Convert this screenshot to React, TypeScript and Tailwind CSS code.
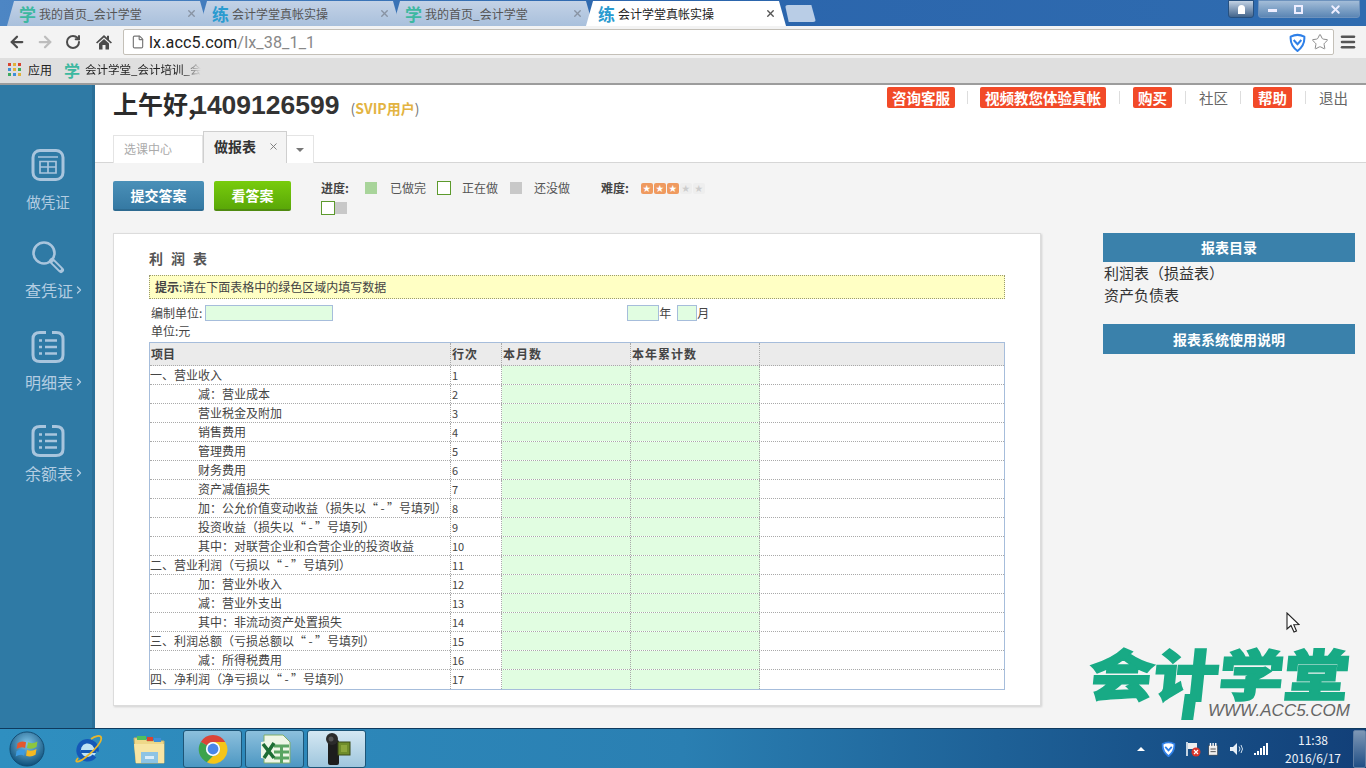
import { ArrowLeft, ArrowRight, ChevronRight, File, Menu, RotateCw, Star, X } from "lucide-react"

const FONT = "[font-family:'Noto_Sans_CJK_SC','Liberation_Sans',sans-serif]"

const DASH = "\u201C\u2009-\u2009\u201D"

const rows = [
  { name: "一、营业收入", top: true },
  { name: "减\uFF1A营业成本" },
  { name: "营业税金及附加" },
  { name: "销售费用" },
  { name: "管理费用" },
  { name: "财务费用" },
  { name: "资产减值损失" },
  { name: `加\uFF1A公允价值变动收益\uFF08损失以${DASH}号填列\uFF09` },
  { name: `投资收益\uFF08损失以${DASH}号填列\uFF09` },
  { name: "其中\uFF1A对联营企业和合营企业的投资收益" },
  { name: `二、营业利润\uFF08亏损以${DASH}号填列\uFF09`, top: true },
  { name: "加\uFF1A营业外收入" },
  { name: "减\uFF1A营业外支出" },
  { name: "其中\uFF1A非流动资产处置损失" },
  { name: `三、利润总额\uFF08亏损总额以${DASH}号填列\uFF09`, top: true },
  { name: "减\uFF1A所得税费用" },
  { name: `四、净利润\uFF08净亏损以${DASH}号填列\uFF09`, top: true },
]

function Shield({ className }: { className?: string }) {
  return (
    <svg viewBox="0 0 20 22" className={className} fill="none">
      <path d="M2 4 Q10 0 18 4 Q19 14 10 21 Q1 14 2 4Z" stroke="#2f80e8" strokeWidth="2.4" fill="#fff" />
      <path d="M5.5 8 L10 13 L14.5 8" stroke="#2f80e8" strokeWidth="2.4" />
    </svg>
  )
}

function BrowserTab({ glyph, title, active }: { glyph: string; title: string; active?: boolean }) {
  const isXue = glyph === "学"
  return (
    <div
      className={`flex h-[25px] w-[200px] -mr-[7px] items-center pl-[12px] pr-[10px] [clip-path:polygon(0_100%,7px_0,calc(100%-7px)_0,100%_100%)] ${
        active ? "z-10 bg-white" : "bg-gradient-to-b from-[#c3d2e6] to-[#a9c0dc]"
      }`}
    >
      <span className={`text-[17px] font-bold leading-none ${isXue ? "text-[#3db8a0]" : "text-[#2a9bd0]"}`}>{glyph}</span>
      <span className={`ml-[3px] flex-1 truncate text-[12px] ${active ? "text-[#222]" : "text-[#555]"}`}>{title}</span>
      <X size={11} strokeWidth={3} className={active ? "text-[#555]" : "text-[#8893a3]"} />
    </div>
  )
}

function TopBar() {
  return (
    <div className="flex h-[26px] items-end bg-gradient-to-r from-[#4d86c4] via-[#2b65ac] to-[#2f6cb0] pl-[7px]">
      <BrowserTab glyph="学" title="我的首页_会计学堂" />
      <BrowserTab glyph="练" title="会计学堂真帐实操" />
      <BrowserTab glyph="学" title="我的首页_会计学堂" />
      <BrowserTab glyph="练" title="会计学堂真帐实操" active />
      <div className="mb-[4px] ml-[6px] h-[17px] w-[31px] self-end rounded-[3px] bg-[#b9cde6] [clip-path:polygon(0_0,85%_0,100%_100%,12%_100%)]" />
      <div className="ml-auto mb-[8px] flex h-[18px] items-stretch self-start">
        <div className="flex w-[26px] items-center justify-center rounded-b-[3px] border border-[#26507f] bg-gradient-to-b from-[#c2d2e4] to-[#43658c]">
          <div className="h-[9px] w-[7px] rounded-t-full bg-white" />
        </div>
        <div className="ml-[4px] flex w-[102px] rounded-b-[3px] border border-[#6d92bd] bg-gradient-to-b from-[#a3bdd8] to-[#5b86b4] text-[#eef]">
          <div className="flex w-[27px] items-center justify-center">
            <div className="mt-[3px] h-[3px] w-[9px] bg-[#eef]" />
          </div>
          <div className="flex w-[25px] items-center justify-center">
            <div className="h-[9px] w-[9px] border-2 border-[#eef]" />
          </div>
          <div className="flex flex-1 items-center justify-center">
            <X size={13} strokeWidth={3.5} />
          </div>
        </div>
        <div className="w-[6px]" />
      </div>
    </div>
  )
}

function HomeIcon() {
  return (
    <svg viewBox="0 0 16 16" className="ml-[15px] h-[16px] w-[16px]">
      <path d="M8 1 L11 3.8 V1.8 H13 V5.7 L16 8.5 L14.8 9.6 L8 3.6 L1.2 9.6 L0 8.5Z" fill="#4c4c4c" />
      <path d="M3 9.5 L8 5 L13 9.5 V15.5 H9.5 V11 H6.5 V15.5 H3Z" fill="#4c4c4c" />
    </svg>
  )
}

function Toolbar() {
  return (
    <div className="flex h-[32px] items-center bg-[#f3f3f3] pl-[8px]">
      <ArrowLeft size={18} strokeWidth={3} className="text-[#4c4c4c]" />
      <ArrowRight size={18} strokeWidth={3} className="ml-[10px] text-[#bdbdbd]" />
      <RotateCw size={16} strokeWidth={3} className="ml-[11px] text-[#4c4c4c]" />
      <HomeIcon />
      <div className="ml-[11px] flex h-[26px] w-[1211px] items-center rounded-[2px] border border-[#c4c0b8] bg-white pl-[7px] pr-[4px]">
        <File size={14} className="text-[#777]" />
        <span className="ml-[4px] mt-[3px] [font-family:'Roboto','Liberation_Sans',sans-serif] text-[16.2px] tracking-[0.1px] text-[#222]">
          lx.acc5.com<span className="text-[#888]">/lx_38_1_1</span>
        </span>
        <Shield className="ml-auto h-[19px] w-[17px]" />
        <Star size={18} strokeWidth={1.3} className="ml-[5px] text-[#888]" />
      </div>
      <Menu size={18} strokeWidth={3.4} className="ml-[5px] text-[#555]" />
    </div>
  )
}

function Bookmarks() {
  const dots = ["#d8432f", "#e0b23a", "#d8432f", "#3f8fd8", "#e0b23a", "#3faa5e", "#3faa5e", "#3f8fd8", "#e0b23a"]
  return (
    <div className="flex h-[27px] items-center border-b-2 border-[#9c9c9c] bg-[#dfdfdf] pb-[2px] pl-[8px] text-[12px] text-[#222]">
      <div className="grid grid-cols-3 gap-[2px]">
        {dots.map((c, i) => (
          <div key={i} className="h-[3px] w-[3px]" style={{ backgroundColor: c }} />
        ))}
      </div>
      <span className="ml-[7px]">应用</span>
      <span className="ml-[12px] text-[16px] font-bold leading-none text-[#3db8a0]">学</span>
      <span className="ml-[5px] w-[116px] overflow-hidden whitespace-nowrap text-[11.5px] [mask-image:linear-gradient(to_right,black_85%,transparent)]">会计学堂_会计培训_会</span>
    </div>
  )
}

function CalendarIcon() {
  return (
    <svg viewBox="0 0 34 34" className="h-[34px] w-[34px]" fill="none" stroke="#a9c5dd">
      <rect x="2" y="2.5" width="30" height="29" rx="7" strokeWidth="3" />
      <path d="M7 9 H27 M9 13.5 H25 V25 H9Z M9 19 H25 M17 13.5 V25" strokeWidth="1.7" />
    </svg>
  )
}

function SearchIcon() {
  return (
    <svg viewBox="0 0 34 34" className="h-[34px] w-[34px]" fill="none" stroke="#a9c5dd">
      <circle cx="13" cy="13" r="10.5" strokeWidth="2.6" />
      <path d="M21 21 L30 30" strokeWidth="6" strokeLinecap="round" />
      <path d="M22.5 22.5 L29 29" stroke="#2f7aa5" strokeWidth="2" strokeLinecap="round" />
    </svg>
  )
}

function ListIcon() {
  return (
    <svg viewBox="0 0 34 34" className="h-[34px] w-[34px]" fill="none" stroke="#a9c5dd">
      <path d="M21 2.5 H25 Q32 2.5 32 9 V25 Q32 31.5 25 31.5 H9 Q2 31.5 2 25 V9 Q2 2.5 9 2.5 H15" strokeWidth="3" />
      <path d="M8 10.5 H11 M14 10.5 H26 M8 17 H11 M14 17 H26 M8 23.5 H11 M14 23.5 H26" strokeWidth="2.6" />
    </svg>
  )
}

function SideItem({ icon, label, arrow, mt, text }: { icon: React.ReactNode; label: string; arrow?: boolean; mt: string; text: string }) {
  return (
    <div className={`flex flex-col items-center ${mt}`}>
      {icon}
      <div className={`flex items-center leading-[20px] text-[#b3cde2] ${arrow ? "ml-[14px]" : ""} ${text}`}>
        {label}
        {arrow && <ChevronRight size={12} strokeWidth={2.6} />}
      </div>
    </div>
  )
}

function Sidebar() {
  return (
    <aside className="flex w-[95px] shrink-0 flex-col items-center border-r-[3px] border-[#2a6f98] bg-[#2f7aa5] pl-[4px]">
      <SideItem mt="mt-[63px]" icon={<CalendarIcon />} label="做凭证" text="mt-[10px] text-[14.5px]" />
      <SideItem mt="mt-[28px]" icon={<SearchIcon />} label="查凭证" arrow text="mt-[6px] text-[16px]" />
      <SideItem mt="mt-[30px]" icon={<ListIcon />} label="明细表" arrow text="mt-[8px] text-[16px]" />
      <SideItem mt="mt-[32px]" icon={<ListIcon />} label="余额表" arrow text="mt-[5px] text-[16px]" />
    </aside>
  )
}

function RedLink({ label }: { label: string }) {
  return <span className="rounded-[2px] bg-[#f24a28] px-[5px] text-[14.5px] font-semibold leading-[21px] text-white">{label}</span>
}

function Sep({ tight }: { tight?: boolean }) {
  return <span className={`h-[13px] w-px bg-[#ddd] ${tight ? "mx-[12px]" : "mx-[13px]"}`} />
}

function Header() {
  return (
    <header className="relative h-[78px] shrink-0 border-b border-[#d6d6d6] bg-white pl-[18px]">
      <div className="flex items-start">
        <div className="mt-[1px] flex items-baseline">
          <span className="[font-family:'Noto_Sans_CJK_SC',sans-serif] text-[25px] font-bold leading-[34px] text-[#2b2b2b]">上午好,</span>
          <span className="-ml-[4px] [font-family:'Liberation_Sans',sans-serif] text-[26.5px] font-bold leading-[34px] text-[#333]">1409126599</span>
          <span className="ml-[11px] text-[14px] text-[#777]">
            (<span className="font-bold text-[#e3b341]">SVIP用户</span>)
          </span>
        </div>
        <div className="ml-auto mt-[2px] flex items-center pr-[18px]">
          <RedLink label="咨询客服" />
          <Sep tight />
          <RedLink label="视频教您体验真帐" />
          <Sep />
          <RedLink label="购买" />
          <Sep />
          <span className="text-[14.5px] text-[#666]">社区</span>
          <Sep tight />
          <RedLink label="帮助" />
          <Sep />
          <span className="text-[14.5px] text-[#666]">退出</span>
        </div>
      </div>
      <div className="absolute bottom-[-1px] left-[18px] flex items-end">
        <div className="flex h-[28px] w-[90px] items-center border border-b-0 border-[#e4e4e4] bg-white pb-[2px] pl-[10px] text-[12px] text-[#aaa]">选课中心</div>
        <div className="flex h-[32px] w-[84px] items-center border border-b-0 border-[#cfcfcf] bg-[#f4f4f4] pb-[2px] pl-[10px] text-[14px] font-semibold text-[#333]">
          做报表
          <X size={11} strokeWidth={2} className="ml-[12px] text-[#777]" />
        </div>
        <div className="flex h-[28px] w-[27px] items-center justify-center border border-b-0 border-l-0 border-[#e4e4e4] bg-white">
          <div className="h-0 w-0 border-x-[4px] border-t-[4px] border-x-transparent border-t-[#777]" />
        </div>
      </div>
    </header>
  )
}

function Legend() {
  return (
    <div className="-mt-px ml-[30px] w-[400px] text-[12px] leading-[16px] text-[#555]">
      <div className="flex items-center">
        <b className="font-semibold text-[#444]">进度:</b>
        <span className="ml-[16px] h-[12px] w-[12px] bg-[#a8d49a]" />
        <span className="ml-[13px]">已做完</span>
        <span className="ml-[11px] h-[14px] w-[14px] border border-[#5c9a2c] bg-white" />
        <span className="ml-[11px]">正在做</span>
        <span className="ml-[12px] h-[12px] w-[12px] bg-[#c8c8c8]" />
        <span className="ml-[12px]">还没做</span>
        <b className="ml-[31px] font-semibold text-[#444]">难度:</b>
        <div className="ml-[12px] flex">
          {[0, 1, 2].map((i) => (
            <span key={i} className="mr-px flex h-[11px] w-[12px] items-center justify-center rounded-[2px] bg-[#ef9a5f] text-[8px] leading-none text-white">★</span>
          ))}
          {[0, 1].map((i) => (
            <span key={i} className="mr-px flex h-[11px] w-[12px] items-center justify-center rounded-[2px] bg-[#eee] text-[8px] leading-none text-[#ccc]">★</span>
          ))}
        </div>
      </div>
      <div className="mt-[5px] flex">
        <span className="h-[14px] w-[14px] border border-[#5c9a2c] bg-white" />
        <span className="h-[12px] w-[12px] self-center bg-[#c8c8c8]" />
      </div>
    </div>
  )
}

function GreenInput({ w }: { w: string }) {
  return <span className={`h-[16px] border border-[#a6bddb] bg-[#e1fde1] ${w}`} />
}

function Sheet() {
  const cell = "border-r border-dotted border-[#a9a9a9]"
  return (
    <section className="h-[473px] w-[928px] border border-[#dcdcdc] bg-white px-[35px] pt-[14px] text-[12px] text-[#444] shadow-[1px_1px_2px_rgba(0,0,0,0.15)]">
      <div className="text-[14px] font-bold leading-[20px] tracking-[2.4px] text-[#555]">利 润 表</div>
      <div className="mt-[7px] flex h-[24px] w-[856px] items-center border border-dotted border-[#9a9a70] bg-[#ffffc4] pl-[5px] text-[12px] text-[#444]">
        <b className="font-semibold">提示</b>:请在下面表格中的绿色区域内填写数据
      </div>
      <div className="mt-[6px] flex h-[16px] items-center pl-[2px]">
        编制单位:
        <GreenInput w="ml-[3px] w-[128px]" />
        <GreenInput w="ml-[294px] w-[32px]" />
        <span>年</span>
        <GreenInput w="ml-[6px] w-[20px]" />
        <span>月</span>
      </div>
      <div className="h-[21px] pl-[2px] leading-[20px]">单位:元</div>
      <div className="w-[856px] border border-[#a6bddb]">
        <div className="grid h-[23px] grid-cols-[301px_51px_129px_129px_1fr] items-center border-b border-dotted border-[#a9a9a9] bg-[#ebebeb] font-bold leading-[22px] text-[#444]">
          <div className={`h-full pl-px ${cell}`}>项目</div>
          <div className={`h-full pl-px tracking-[1px] ${cell}`}>行次</div>
          <div className={`h-full pl-px tracking-[1px] ${cell}`}>本月数</div>
          <div className={`h-full pl-px tracking-[1px] ${cell}`}>本年累计数</div>
          <div />
        </div>
        {rows.map((r, i) => (
          <div
            key={i}
            className={`grid h-[19px] grid-cols-[301px_51px_129px_129px_1fr] leading-[18px] ${i < rows.length - 1 ? "border-b border-dotted border-[#a9a9a9]" : ""}`}
          >
            <div className={`h-full whitespace-nowrap ${r.top ? "" : "pl-[48px]"} ${cell}`}>{r.name}</div>
            <div className={`h-full pl-px text-[11px] ${cell}`}>{i + 1}</div>
            <div className={`h-full bg-[#e1fde1] ${cell}`} />
            <div className={`h-full bg-[#e1fde1] ${cell}`} />
            <div />
          </div>
        ))}
      </div>
    </section>
  )
}

function RightPanel() {
  const bar = "flex items-center justify-center bg-[#3a81ab] text-[14px] font-semibold text-white"
  return (
    <div className="ml-[62px] w-[252px] text-[15px] text-[#333]">
      <div className={`${bar} h-[29px]`}>报表目录</div>
      <div className="pl-px leading-[22px]">利润表{"\uFF08"}损益表{"\uFF09"}</div>
      <div className="pl-px leading-[22px]">资产负债表</div>
      <div className={`${bar} mt-[18px] h-[30px]`}>报表系统使用说明</div>
    </div>
  )
}

function Logo() {
  return (
    <div className="pointer-events-none absolute bottom-[8px] right-[16px] h-[72px] w-[260px]">
      <div className="origin-top-left -skew-x-[5deg] scale-y-[0.85] whitespace-nowrap pl-[2px] text-[65px] font-black leading-[56px] text-[#18aa85] [-webkit-text-stroke:2px_#18aa85]">
        会计学堂
      </div>
      <div className="absolute left-[93px] top-[46px] h-[26px] w-[12px] -skew-x-[8deg] bg-[#18aa85]" />
      <div className="absolute right-0 top-[54px] [font-family:'Liberation_Sans',sans-serif] text-[17px] italic leading-[18px] text-[#666]">WWW.ACC5.COM</div>
    </div>
  )
}

function Cursor() {
  return (
    <svg viewBox="0 0 14 21" className="absolute right-[66px] top-[527px] h-[21px] w-[14px]">
      <path d="M1 1 V17 L5 13.5 L8 20 L10.5 19 L7.8 12.8 L13 12.5Z" fill="#fff" stroke="#222" strokeWidth="1.1" />
    </svg>
  )
}

function Orb() {
  return (
    <svg viewBox="0 0 38 38" className="h-[36px] w-[36px]">
      <defs>
        <radialGradient id="orb" cx="50%" cy="35%" r="65%">
          <stop offset="0%" stopColor="#7fc4e8" />
          <stop offset="100%" stopColor="#0d4f7a" />
        </radialGradient>
      </defs>
      <circle cx="19" cy="19" r="18" fill="url(#orb)" stroke="#134a70" />
      <path d="M9 13 Q13 10 18 12 L17 18 Q13 16 8 19Z" fill="#e4572e" />
      <path d="M20 12 Q25 14 30 11 L29 17 Q24 20 19 18Z" fill="#8cc63f" />
      <path d="M8 21 Q13 18 17 20 L16 26 Q12 24 7 27Z" fill="#3d9be0" />
      <path d="M19 20 Q24 22 29 19 L28 25 Q23 28 18 26Z" fill="#f5b922" />
    </svg>
  )
}

function IeIcon() {
  return (
    <svg viewBox="0 0 32 32" className="ml-[27px] h-[32px] w-[32px]" fill="none">
      <circle cx="15.5" cy="17" r="9" fill="#bfe2f5" />
      <path d="M24 18.5 H9" stroke="#1558b8" strokeWidth="3" />
      <path d="M24.5 18.5 A9 9 0 1 0 22.5 23" stroke="#1558b8" strokeWidth="4.5" />
      <path d="M6 25 C1 31 8 29 14 24 C22 18 31 8 29 4 C28 2 23 3 19 6" stroke="#e8b62c" strokeWidth="1.8" />
    </svg>
  )
}

function FolderIcon() {
  return (
    <svg viewBox="0 0 32 32" className="h-[32px] w-[32px]">
      <path d="M1 5 H12 L14 8 H31 V30 H3Z" fill="#eed889" stroke="#c9b36a" />
      <rect x="4" y="3" width="9" height="4" fill="#4fbf5e" />
      <rect x="14" y="4" width="6" height="4" fill="#d9452f" />
      <rect x="21" y="5" width="7" height="4" fill="#3f8fd8" />
      <path d="M1 11 H31 V30 H3Z" fill="#f7e5a4" />
      <rect x="8" y="19" width="17" height="11" fill="#8ec4e4" />
      <rect x="12" y="23" width="9" height="3" fill="#dbeefa" />
    </svg>
  )
}

function ChromeIcon() {
  return (
    <svg viewBox="0 0 32 32" className="h-[30px] w-[30px]">
      <path d="M16 1 A15 15 0 0 1 29 8.5 H16 A7.5 7.5 0 0 0 9.5 12.2 L3 8.5 A15 15 0 0 1 16 1Z" fill="#db4437" />
      <path d="M3 8.5 L9.5 12.2 A7.5 7.5 0 0 0 16 23.5 L9.5 30 A15 15 0 0 1 3 8.5Z" fill="#3da34c" />
      <path d="M29 8.5 A15 15 0 0 1 9.5 30 L16 23.5 A7.5 7.5 0 0 0 22.5 12.2 L16 8.5Z" fill="#f5c518" />
      <circle cx="16" cy="16" r="7.5" fill="#fff" />
      <circle cx="16" cy="16" r="5.8" fill="#4a86e8" />
    </svg>
  )
}

function ExcelIcon() {
  return (
    <svg viewBox="0 0 32 32" className="h-[32px] w-[32px]">
      <path d="M5 2 H24 L31 9 V30 H5Z" fill="#eef6e6" stroke="#7fae6a" />
      <path d="M15 13 H30 M15 19 H30 M15 25 H30 M22.5 13 V30" stroke="#5aa562" strokeWidth="3" />
      <path d="M2 9 L15 7 V27 L2 25Z" fill="#eef6e6" />
      <path d="M4 11 L15 25 M15 10 L5 25" stroke="#1d6d34" strokeWidth="3.5" />
    </svg>
  )
}

function CameraIcon() {
  return (
    <svg viewBox="0 0 28 34" className="h-[34px] w-[28px]">
      <rect x="5" y="8" width="11" height="25" rx="2" fill="#1d1d1d" />
      <circle cx="9" cy="7" r="6" fill="#2b2b2b" />
      <circle cx="8" cy="7" r="2.5" fill="#555" />
      <rect x="15" y="10" width="12" height="13" fill="#6f8c2a" stroke="#3b4a18" />
      <rect x="18" y="13" width="6" height="7" fill="#8ca63c" />
    </svg>
  )
}

function TaskButton({ children, active }: { children: React.ReactNode; active?: boolean }) {
  return (
    <div
      className={`flex h-[38px] w-[59px] items-center justify-center rounded-[3px] border border-[#1d5577] ${
        active ? "bg-gradient-to-b from-[#d5e8f3] to-[#9fc6dd]" : "bg-gradient-to-b from-[#8cc0dd] to-[#4b97c2]"
      }`}
    >
      {children}
    </div>
  )
}

function Taskbar() {
  return (
    <footer className="flex h-[40px] shrink-0 items-center border-t border-[#0f3a5e] bg-gradient-to-r from-[#2f8fc0] via-[#2a7fb2] to-[#123f78] pl-[9px] text-white">
      <Orb />
      <IeIcon />
      <div className="ml-[29px] w-[32px]">
        <FolderIcon />
      </div>
      <div className="ml-[18px] flex gap-[3px]">
        <TaskButton>
          <ChromeIcon />
        </TaskButton>
        <TaskButton>
          <ExcelIcon />
        </TaskButton>
        <TaskButton active>
          <CameraIcon />
        </TaskButton>
      </div>
      <div className="ml-auto flex items-center">
        <div className="h-0 w-0 border-x-[4px] border-b-[4px] border-x-transparent border-b-white" />
        <Shield className="ml-[16px] h-[16px] w-[15px]" />
        <svg viewBox="0 0 16 16" className="ml-[9px] h-[16px] w-[16px]">
          <path d="M2 1 V15" stroke="#fff" strokeWidth="1.5" />
          <path d="M3 2 H12 V8 H3Z" fill="#eee" />
          <circle cx="11" cy="11" r="4.5" fill="#d9352b" />
          <path d="M9 9 L13 13 M13 9 L9 13" stroke="#fff" strokeWidth="1.2" />
        </svg>
        <svg viewBox="0 0 16 16" className="ml-[6px] h-[16px] w-[14px]">
          <rect x="2" y="4" width="10" height="11" fill="#eee" stroke="#333" strokeWidth="0.6" />
          <path d="M4 1 V5 M7 1 V5 M10 1 V5" stroke="#fff" strokeWidth="1.6" />
          <path d="M4 8 H10 M4 11 H10" stroke="#444" />
        </svg>
        <svg viewBox="0 0 16 16" className="ml-[8px] h-[16px] w-[16px]" fill="none">
          <path d="M1 6 H4 L8 2 V14 L4 10 H1Z" fill="#e6eef6" />
          <path d="M10 5.5 Q12 8 10 10.5 M12 4 Q15 8 12 12" stroke="#cfe0ef" />
        </svg>
        <div className="ml-[9px] flex h-[12px] items-end gap-px">
          <span className="h-[2px] w-[2px] bg-white" />
          <span className="h-[4px] w-[2px] bg-white" />
          <span className="h-[7px] w-[2px] bg-white" />
          <span className="h-[9px] w-[2px] bg-white" />
          <span className="h-[12px] w-[2px] bg-white" />
        </div>
        <div className="ml-[13px] w-[64px] text-center text-[12px] leading-[18px] text-[#f0f4fa]">
          <div>11:38</div>
          <div>2016/6/17</div>
        </div>
        <div className="ml-[8px] h-[38px] w-[13px] rounded-[2px] border border-[#5f7ea3] bg-gradient-to-b from-[#7e97b5] to-[#1f4f85]" />
      </div>
    </footer>
  )
}

export default function App() {
  return (
    <div className={`flex h-[768px] w-[1366px] flex-col overflow-hidden bg-[#f4f4f4] ${FONT}`}>
      <TopBar />
      <Toolbar />
      <Bookmarks />
      <div className="flex min-h-0 flex-1">
        <Sidebar />
        <main className="relative flex-1">
          <Header />
          <div className="flex items-start pl-[18px] pt-[18px]">
            <div className="flex h-[30px] w-[91px] items-center justify-center rounded-[2px] border-b-2 border-[#2d6a90] bg-gradient-to-b from-[#4a90b8] to-[#3579a3] text-[14px] font-semibold text-white">提交答案</div>
            <div className="ml-[10px] flex h-[30px] w-[77px] items-center justify-center rounded-[2px] border-b-2 border-[#4f8a10] bg-gradient-to-b from-[#78cc0c] to-[#5aa808] text-[14px] font-semibold text-white">看答案</div>
            <Legend />
          </div>
          <div className="flex items-start pl-[18px] pt-[18px]">
            <Sheet />
            <RightPanel />
          </div>
          <Cursor />
          <Logo />
        </main>
      </div>
      <Taskbar />
    </div>
  )
}
